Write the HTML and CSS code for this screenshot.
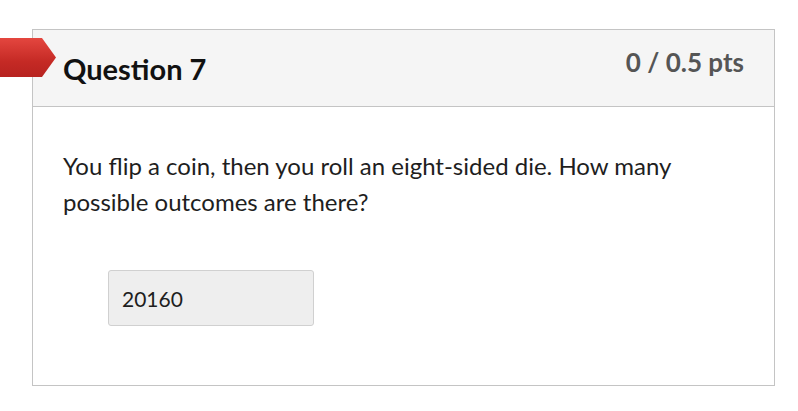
FILE: index.html
```html
<!DOCTYPE html>
<html>
<head>
<meta charset="utf-8">
<link rel="stylesheet" href="styles.css">
</head>
<body>
<div class="card">
  <div class="flag"></div>
  <div class="header">
    <h2 class="title">Question 7</h2>
    <div class="pts">0 / 0.5 pts</div>
  </div>
  <div class="content">
    <p class="question">You flip a coin, then you roll an eight-sided die. How many possible outcomes are there?</p>
    <div class="answer">20160</div>
  </div>
</div>
</body>
</html>
```
FILE: styles.css
```css
html, body {
  margin: 0;
  padding: 0;
  background: #fff;
}
body {
  font-family: Lato, "Open Sans", sans-serif;
  color: #1e1e1e;
}
.card {
  position: relative;
  margin: 29px 0 0 32px;
  width: 743px;
  box-sizing: border-box;
  border: 1px solid #c4c4c4;
}
.flag {
  position: absolute;
  left: -33px;
  top: 8px;
  width: 56px;
  height: 39px;
  background: linear-gradient(#e4463f, #c52a25 60%, #b72320);
  clip-path: polygon(0 0, 42px 0, 56px 50%, 42px 100%, 0 100%);
}
.header {
  display: flex;
  justify-content: space-between;
  align-items: flex-start;
  height: 77px;
  box-sizing: border-box;
  padding: 17px 30px 0 30px;
  background: #f5f5f5;
  border-bottom: 1px solid #c4c4c4;
}
.title {
  margin: 4px 0 0 0;
  font-size: 29px;
  line-height: 36px;
  font-weight: 700;
  color: #111;
}
.pts {
  font-size: 26px;
  line-height: 30px;
  font-weight: 700;
  color: #555;
}
.content {
  padding: 41px 30px 59px 30px;
}
.question {
  margin: 0;
  font-size: 24px;
  line-height: 36px;
  color: #1e1e1e;
}
.answer {
  margin: 50px 0 0 45px;
  width: 206px;
  height: 56px;
  box-sizing: border-box;
  padding-left: 13px;
  display: flex;
  align-items: center;
  background: #eeeeee;
  border: 1px solid #d0d0d0;
  border-radius: 3px;
  font-size: 21px;
  color: #1e1e1e;
}
```
